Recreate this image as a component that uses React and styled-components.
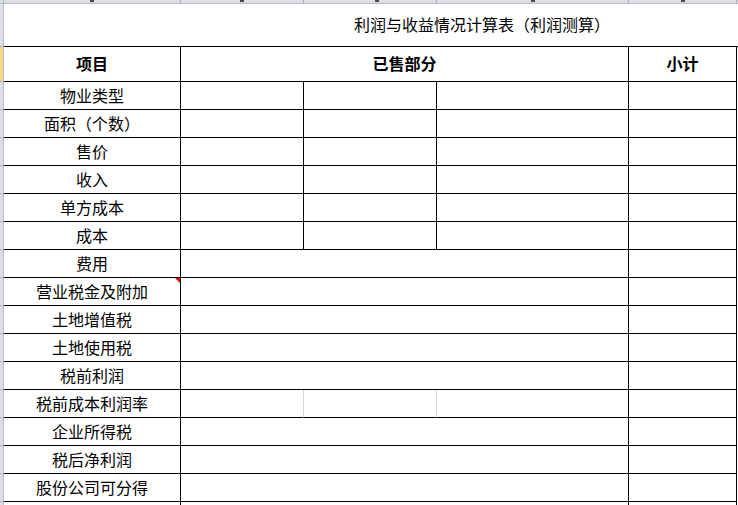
import React from "react";
import styled, { createGlobalStyle } from "styled-components";

const GlobalStyle = createGlobalStyle`
  html, body {
    margin: 0;
    padding: 0;
    background: #ffffff;
    overflow: hidden;
  }
  body {
    font-family: "Noto Sans CJK SC", "Noto Sans", sans-serif;
    color: #000;
  }
`;

const COLS = "177px 123px 133px 192px 108px";

const Page = styled.div`
  width: 738px;
  height: 505px;
  overflow: hidden;
  display: flex;
  flex-direction: column;
`;

const ColumnHeaderBar = styled.div`
  display: grid;
  grid-template-columns: 4px ${COLS} 1fr;
  height: 4px;
  flex: none;
`;

const ColHead = styled.div`
  box-sizing: border-box;
  height: 4px;
  background: #dcdfe4;
  border-bottom: 1px solid #b9bec6;
  border-right: 1px solid ${(p) => (p.$last ? "transparent" : "#a9aeb6")};
  display: flex;
  justify-content: center;
  padding-left: ${(p) => p.$shift || 0}px;
`;

const ColMark = styled.span`
  width: 4px;
  height: 2px;
  background: #4a4a4a;
`;

const Body = styled.div`
  display: flex;
  flex: 1;
  min-height: 0;
`;

const RowHeaderBar = styled.div`
  width: 4px;
  flex: none;
  display: flex;
  flex-direction: column;
`;

const RowHead = styled.div`
  box-sizing: border-box;
  flex: none;
  height: ${(p) => p.$h}px;
  background: ${(p) => (p.$selected ? "#f6d97c" : "#dcdfe4")};
  border-right: 1px solid #b9bec6;
  border-bottom: 1px solid #aeb3ba;
`;

const Sheet = styled.div`
  flex: 1;
  display: flex;
  flex-direction: column;
`;

const TitleRow = styled.div`
  box-sizing: border-box;
  height: 42px;
  flex: none;
  display: flex;
  align-items: center;
  padding-left: 350px;
  padding-bottom: 3px;
  font-size: 16px;
  white-space: nowrap;
`;

const Grid = styled.div`
  display: grid;
  grid-template-columns: ${COLS};
  grid-template-rows: 35px;
  grid-auto-rows: 28px;
  border-top: 1px solid #000;
`;

const Cell = styled.div`
  position: relative;
  box-sizing: border-box;
  grid-column: span ${(p) => p.$span || 1};
  border-right: 1px solid ${(p) => (p.$soft ? "#d4d4d4" : "#000")};
  border-bottom: 1px solid #000;
  display: flex;
  align-items: center;
  justify-content: center;
  padding-bottom: 2px;
  font-size: 16px;
  font-weight: ${(p) => (p.$bold ? 700 : 400)};
  white-space: nowrap;
  line-height: 1;
`;

const CommentMark = styled.span`
  position: absolute;
  top: 0;
  right: 0;
  width: 0;
  height: 0;
  border-top: 5px solid #ff0000;
  border-left: 5px solid transparent;
`;

const rows = [
  { label: "物业类型", kind: "split" },
  { label: "面积（个数）", kind: "split" },
  { label: "售价", kind: "split" },
  { label: "收入", kind: "split" },
  { label: "单方成本", kind: "split" },
  { label: "成本", kind: "split" },
  { label: "费用", kind: "merged" },
  { label: "营业税金及附加", kind: "merged", comment: true },
  { label: "土地增值税", kind: "merged" },
  { label: "土地使用税", kind: "merged" },
  { label: "税前利润", kind: "merged" },
  { label: "税前成本利润率", kind: "soft" },
  { label: "企业所得税", kind: "merged" },
  { label: "税后净利润", kind: "merged" },
  { label: "股份公司可分得", kind: "merged" },
  { label: "", kind: "merged" },
];

const colMarks = [
  { shift: -8 },
  { shift: 0 },
  { shift: 14 },
  { shift: -4 },
  { shift: -4 },
];

export default function App() {
  return (
    <Page>
      <GlobalStyle />
      <ColumnHeaderBar>
        <ColHead />
        {colMarks.map((m, i) => (
          <ColHead key={i} $shift={m.shift}>
            <ColMark />
          </ColHead>
        ))}
        <ColHead $last />
      </ColumnHeaderBar>
      <Body>
        <RowHeaderBar>
          <RowHead $h={43} />
          <RowHead $h={35} $selected />
          {rows.map((r, i) => (
            <RowHead key={i} $h={28} />
          ))}
        </RowHeaderBar>
        <Sheet>
          <TitleRow>利润与收益情况计算表（利润测算）</TitleRow>
          <Grid>
            <Cell $bold>项目</Cell>
            <Cell $bold $span={3}>
              已售部分
            </Cell>
            <Cell $bold>小计</Cell>
            {rows.map((r, i) => (
              <React.Fragment key={i}>
                <Cell>
                  {r.label}
                  {r.comment && <CommentMark />}
                </Cell>
                {r.kind === "merged" ? (
                  <Cell $span={3} />
                ) : (
                  <>
                    <Cell $soft={r.kind === "soft"} />
                    <Cell $soft={r.kind === "soft"} />
                    <Cell />
                  </>
                )}
                <Cell />
              </React.Fragment>
            ))}
          </Grid>
        </Sheet>
      </Body>
    </Page>
  );
}
